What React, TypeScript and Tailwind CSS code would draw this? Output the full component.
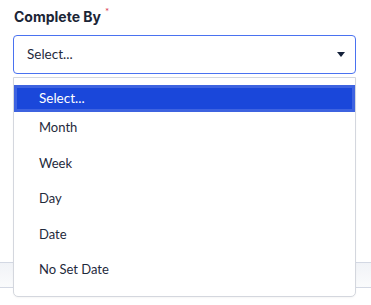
import { useState } from 'react';

const options = ['Select...', 'Month', 'Week', 'Day', 'Date', 'No Set Date'];

export default function App() {
  const [selected] = useState(0);

  return (
    <div className="relative w-[371px] h-[305px] bg-white text-[#1f2a3c]" style={{ fontFamily: 'Lato, "Noto Sans", sans-serif' }}>
      <div className="px-[13px] pt-[8px]">
        {/* Label */}
        <div className="flex items-start h-[17px] pl-[1px]">
          <span className="text-[14px] font-bold leading-[17px] text-[#1b2536]" style={{ fontFamily: 'Inter, sans-serif' }}>
            Complete By
          </span>
          <span className="ml-[4px] -mt-[2px] text-[10px] leading-[10px] text-[#d8334a]">*</span>
        </div>

        {/* Select trigger */}
        <div className="mt-[10px] h-[39px] w-[343px] rounded-[4px] border-[1.5px] border-solid border-[#4a72f0] flex items-center justify-between pl-[13px] pr-[9px]">
          <span className="text-[13.5px] text-[#1f2a3c]">Select...</span>
          <svg width="10" height="7" viewBox="0 0 10 7">
            <path d="M1 1h8L5 6z" fill="#14213a" />
          </svg>
        </div>
      </div>

      {/* Band behind the menu */}
      <div className="mt-[188px] h-[26px] border-y border-[#d3d8e3] bg-gradient-to-b from-[#f1f3f7] to-[#fafbfc]" />

      {/* Listbox */}
      <div className="absolute left-[13px] top-[77px] w-[343px] h-[220px] rounded-b-[5px] border border-[#d4d7de] bg-white pt-[7px] shadow-[0_1px_2px_rgba(0,0,0,0.04)]">
        {options.map((opt, i) =>
          i === selected ? (
            <div
              key={opt}
              className="h-[27px] border-[3px] border-[#3e63e0] bg-[#1a47da] flex items-center pl-[22px] text-[13.5px] text-white"
            >
              {opt}
            </div>
          ) : (
            <div
              key={opt}
              className={`h-[35.5px] flex items-center pl-[25px] text-[13px] text-[#1f2a3c] ${i === 1 ? '-mt-[2px]' : ''}`}
            >
              {opt}
            </div>
          )
        )}
      </div>
    </div>
  );
}
